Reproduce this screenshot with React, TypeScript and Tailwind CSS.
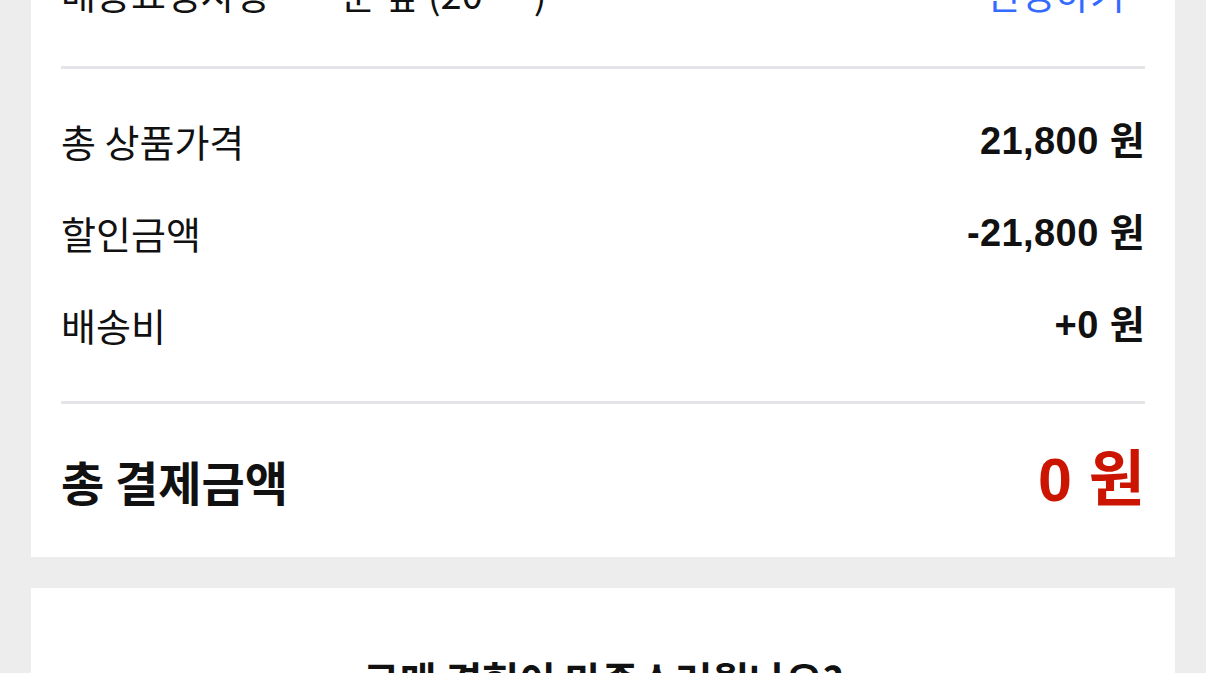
import { ChevronRight } from 'lucide-react'

const kr = { fontFamily: '"Noto Sans CJK KR", sans-serif' }
const num = { fontFamily: '"Liberation Sans", "Noto Sans CJK KR", sans-serif' }

const rows = [
    { label: '총 상품가격', value: '21,800 원' },
    { label: '할인금액', value: '-21,800 원' },
    { label: '배송비', value: '+0 원' },
]

export default function App() {
    return (
        <div className="min-h-screen bg-[#ededed] px-[31px] overflow-hidden">
            {/* Payment Summary Card */}
            <div className="-mt-[28px] bg-white px-[30px]">
                <div className="flex h-[42px] items-center justify-between text-[38px] leading-[42px]" style={kr}>
                    <div className="flex items-center text-[#111]">
                        <span>배송요청사항</span>
                        <span className="ml-[70px] whitespace-pre">문 앞 (20      )</span>
                    </div>
                    <div className="flex items-center text-[#346aff]">
                        <span>변경하기</span>
                        <ChevronRight className="h-[30px] w-[20px]" strokeWidth={1.6} />
                    </div>
                </div>
                <div className="mt-[52px] h-[3px] bg-[#e3e5e8]" />

                <div className="pt-[26px] pb-[30px]">
                    {rows.map((row) => (
                        <div key={row.label} className="flex h-[92px] items-center justify-between text-[#111]">
                            <span className="text-[38px] leading-none" style={kr}>
                                {row.label}
                            </span>
                            <span className="text-[38px] font-bold leading-none tracking-[0.4px]" style={num}>
                                {row.value}
                            </span>
                        </div>
                    ))}
                </div>

                <div className="h-[3px] bg-[#e3e5e8]" />

                <div className="flex h-[153px] items-center justify-between">
                    <span className="text-[47px] font-bold leading-none text-[#111]" style={kr}>
                        총 결제금액
                    </span>
                    <span className="text-[61px] font-bold leading-none text-[#cc1500]" style={num}>
                        0 원
                    </span>
                </div>
            </div>

            {/* Review Card */}
            <div className="mt-[31px] bg-white pt-[68px] pb-[60px]">
                <p className="text-center text-[40px] font-bold leading-[46px] text-[#111]" style={kr}>
                    구매 경험이 만족스러웠나요?
                </p>
            </div>
        </div>
    )
}
